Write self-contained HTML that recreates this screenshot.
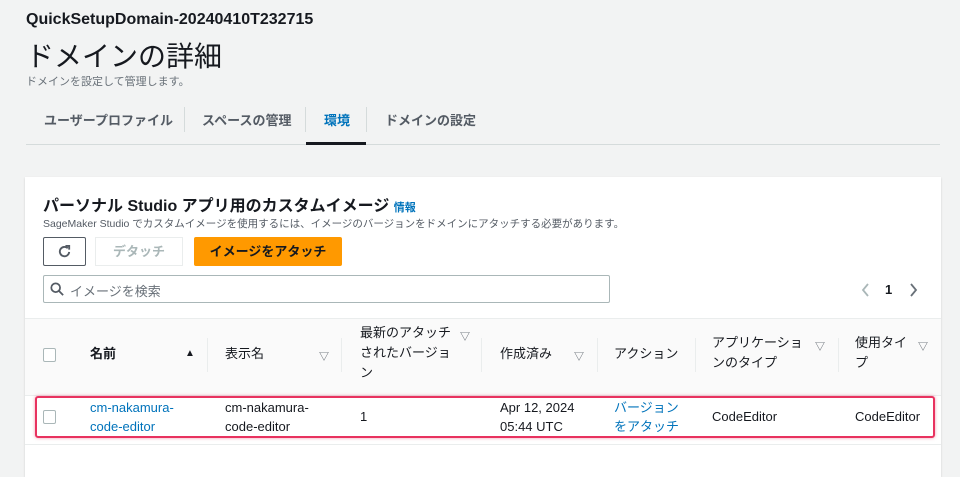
<!DOCTYPE html>
<html><head><meta charset="utf-8"><style>
*{box-sizing:border-box;margin:0;padding:0}
body{width:960px;height:455px;overflow:hidden;background:#f2f3f3;font-family:"Liberation Sans","Noto Sans CJK JP",sans-serif;color:#16191f;position:relative}
.a{position:absolute;white-space:nowrap}
.card{position:absolute;left:25px;top:177px;width:916px;height:300px;background:#fff;box-shadow:0 1px 2px rgba(0,0,0,.15)}
.th{position:absolute;top:318px;left:25px;width:916px;height:78px;background:#fafafa;border-top:1px solid #eaeded;border-bottom:1px solid #eaeded}
.sep{position:absolute;top:338px;width:1px;height:34px;background:#eaeded}
.hd{font-size:13px;color:#16191f;line-height:20px;white-space:normal}
.tri{font-size:10px;color:#545b64}
.cb{position:absolute;width:13px;height:14px;border:1px solid #aab7b8;border-radius:2px;background:#fff}
.c{font-size:13px;line-height:19px}
.lk{color:#0073bb}
</style></head><body>
<div class="a" style="left:26px;top:11px;font-size:16px;font-weight:bold">QuickSetupDomain-20240410T232715</div>
<div class="a" style="left:26px;top:35px;font-size:28px">ドメインの詳細</div>
<div class="a" style="left:26px;top:73px;font-size:11px;color:#687078">ドメインを設定して管理します。</div>
<div class="a" style="left:44px;top:110px;font-size:13px;font-weight:bold;color:#545b64">ユーザープロファイル</div>
<div class="a" style="left:184px;top:107px;width:1px;height:25px;background:#d5dbdb"></div>
<div class="a" style="left:202px;top:110px;font-size:13px;font-weight:bold;color:#545b64">スペースの管理</div>
<div class="a" style="left:305px;top:107px;width:1px;height:25px;background:#d5dbdb"></div>
<div class="a" style="left:324px;top:110px;font-size:13px;font-weight:bold;color:#0073bb">環境</div>
<div class="a" style="left:366px;top:107px;width:1px;height:25px;background:#d5dbdb"></div>
<div class="a" style="left:385px;top:110px;font-size:13px;font-weight:bold;color:#545b64">ドメインの設定</div>
<div class="a" style="left:26px;top:144px;width:914px;height:1px;background:#d5dbdb"></div>
<div class="a" style="left:306px;top:142px;width:60px;height:3px;background:#16191f"></div>

<div class="card"></div>
<div class="a" style="left:43px;top:192px;font-size:16px;font-weight:bold">パーソナル Studio アプリ用のカスタムイメージ <span style="font-size:11px;color:#0073bb">情報</span></div>
<div class="a" style="left:43px;top:216px;font-size:10.5px;color:#545b64">SageMaker Studio でカスタムイメージを使用するには、イメージのバージョンをドメインにアタッチする必要があります。</div>
<div class="a" style="left:43px;top:237px;width:43px;height:29px;border:1px solid #545b64;border-radius:2px"></div>
<svg class="a" style="left:57px;top:244px" width="15" height="15" viewBox="0 0 16 16"><path d="M13 8.5A5 5 0 1 1 11.5 4.5" fill="none" stroke="#545b64" stroke-width="2"/><path d="M9 2h4v4" fill="none" stroke="#545b64" stroke-width="2"/></svg>
<div class="a" style="left:95px;top:237px;width:88px;height:29px;border:1px solid #eaeded;font-size:13px;text-align:center;line-height:27px;color:#aab7b8;font-weight:bold">デタッチ</div>
<div class="a" style="left:194px;top:237px;width:148px;height:29px;background:#ff9900;border-radius:2px;font-size:13px;text-align:center;line-height:29px;font-weight:bold">イメージをアタッチ</div>
<div class="a" style="left:43px;top:275px;width:567px;height:28px;border:1px solid #aab7b8;border-radius:2px;background:#fff"></div>
<svg class="a" style="left:50px;top:282px" width="14" height="14" viewBox="0 0 16 16"><circle cx="6.5" cy="6.5" r="5" fill="none" stroke="#545b64" stroke-width="2"/><path d="M10 10l5 5" stroke="#545b64" stroke-width="2"/></svg>
<div class="a" style="left:70px;top:281px;font-size:13px;color:#687078">イメージを検索</div>
<svg class="a" style="left:861px;top:283px" width="10" height="14" viewBox="0 0 10 14"><path d="M7 1L2 7l5 6" fill="none" stroke="#aab7b8" stroke-width="1.8"/></svg>
<div class="a" style="left:885px;top:282px;font-size:13px;font-weight:bold">1</div>
<svg class="a" style="left:908px;top:283px" width="10" height="14" viewBox="0 0 10 14"><path d="M3 1l5 6-5 6" fill="none" stroke="#687078" stroke-width="1.8"/></svg>

<div class="th"></div>
<div class="cb" style="left:43px;top:348px"></div>
<div class="a hd" style="left:90px;top:344px;font-weight:bold">名前</div><div class="a tri" style="left:185px;top:348px;color:#16191f">▲</div>
<div class="sep" style="left:207px"></div>
<div class="a hd" style="left:225px;top:344px">表示名</div><div class="a tri" style="left:319px;top:348px">▽</div>
<div class="sep" style="left:341px"></div>
<div class="a hd" style="left:360px;top:323px;width:98px">最新のアタッチ<br>されたバージョ<br>ン</div><div class="a tri" style="left:460px;top:328px">▽</div>
<div class="sep" style="left:481px"></div>
<div class="a hd" style="left:500px;top:344px">作成済み</div><div class="a tri" style="left:574px;top:348px">▽</div>
<div class="sep" style="left:597px"></div>
<div class="a hd" style="left:614px;top:344px">アクション</div>
<div class="sep" style="left:695px"></div>
<div class="a hd" style="left:712px;top:333px;width:100px">アプリケーショ<br>ンのタイプ</div><div class="a tri" style="left:815px;top:338px">▽</div>
<div class="sep" style="left:838px"></div>
<div class="a hd" style="left:855px;top:333px;width:70px">使用タイ<br>プ</div><div class="a tri" style="left:918px;top:338px">▽</div>

<div class="a" style="left:35px;top:396px;width:900px;height:42px;border:2px solid #e8325f;border-radius:3px;box-shadow:0 0 3px rgba(232,50,95,.5)"></div>
<div class="cb" style="left:43px;top:410px"></div>
<div class="a c lk" style="left:90px;top:398px">cm-nakamura-<br>code-editor</div>
<div class="a c" style="left:225px;top:398px">cm-nakamura-<br>code-editor</div>
<div class="a c" style="left:360px;top:407px">1</div>
<div class="a c" style="left:500px;top:398px">Apr 12, 2024<br>05:44 UTC</div>
<div class="a c lk" style="left:614px;top:398px">バージョン<br>をアタッチ</div>
<div class="a c" style="left:712px;top:407px">CodeEditor</div>
<div class="a c" style="left:855px;top:407px">CodeEditor</div>
<div class="a" style="left:25px;top:444px;width:916px;height:1px;background:#eaeded"></div>
</body></html>
